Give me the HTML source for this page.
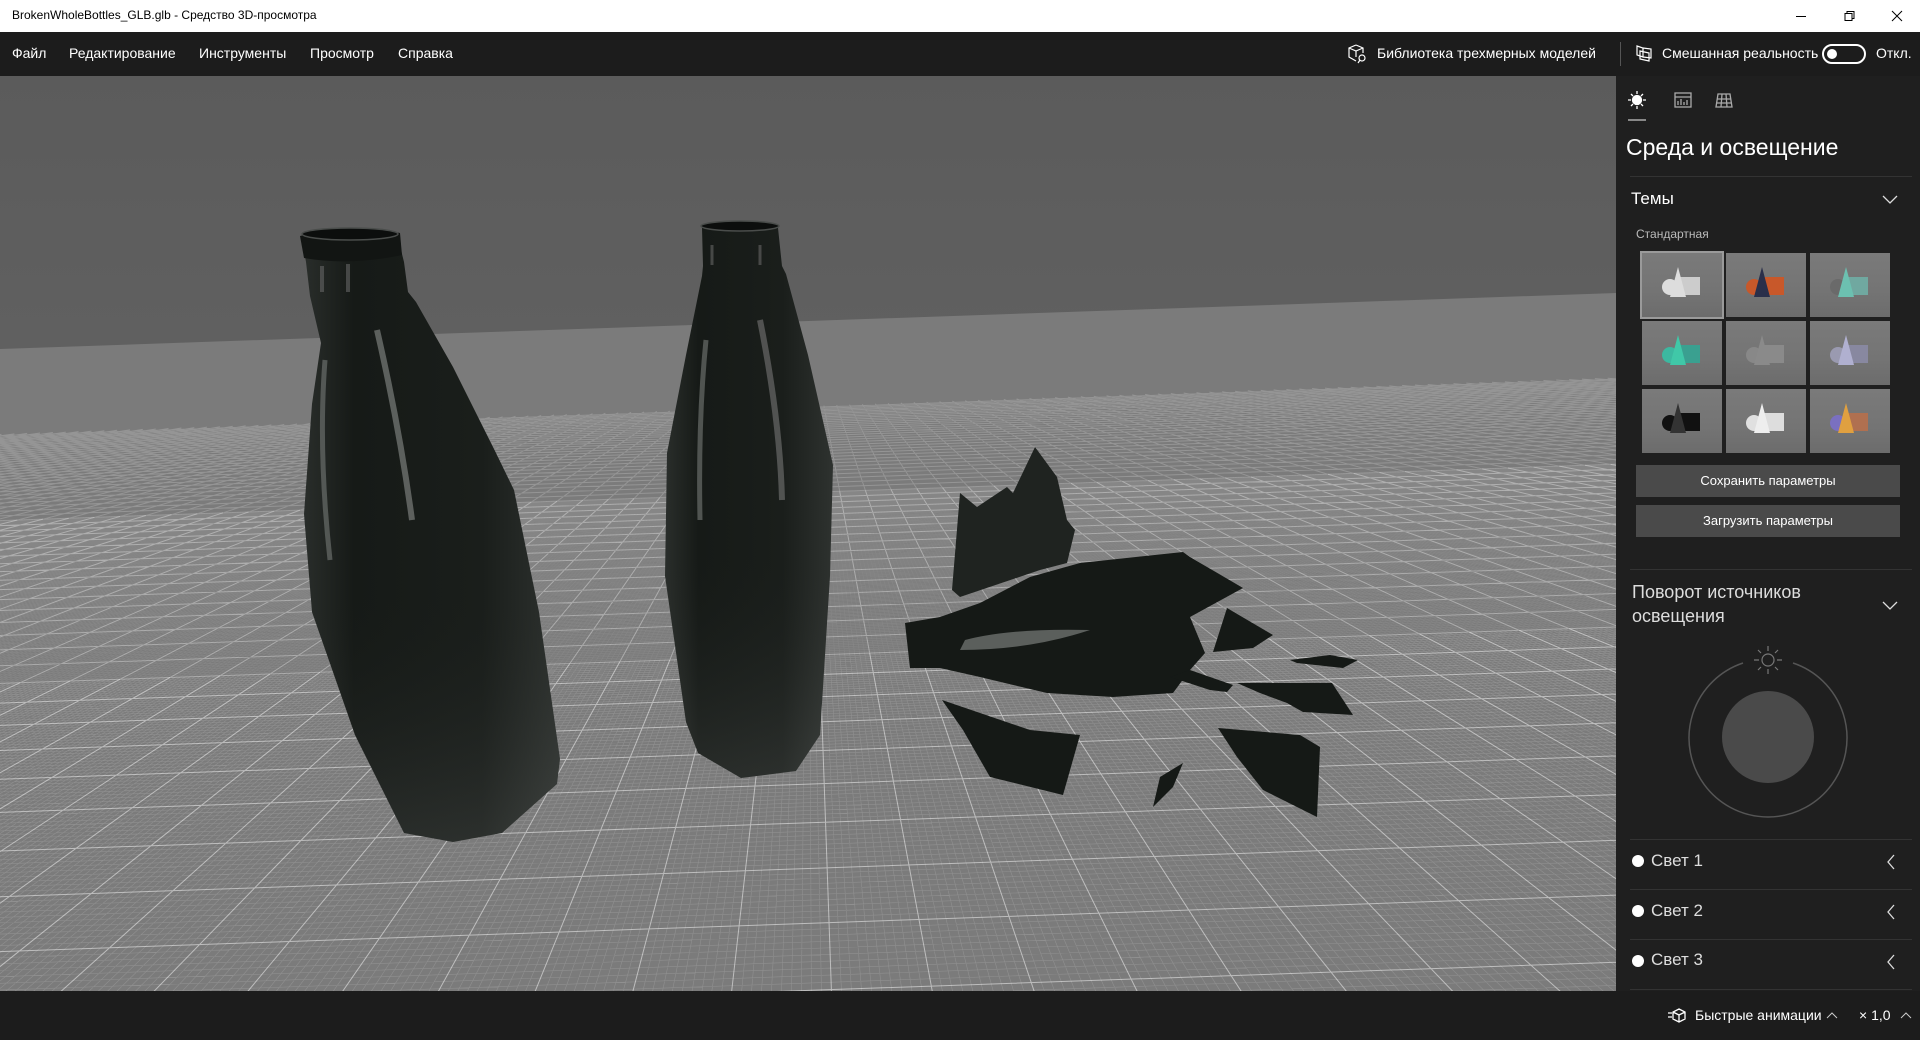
<!DOCTYPE html>
<html><head><meta charset="utf-8">
<style>
*{margin:0;padding:0;box-sizing:border-box}
html,body{width:1920px;height:1040px;overflow:hidden}
body{background:#1f1f1f;font-family:"Segoe UI","Liberation Sans","Noto Sans CJK SC",sans-serif;position:relative;color:#fff}
.abs{position:absolute}
#title{left:0;top:0;width:1920px;height:32px;background:#fff;color:#000;font-size:12px}
#menu{left:0;top:32px;width:1920px;height:44px;background:#1c1c1c;font-size:14px}
#menu span{position:absolute;top:13px;white-space:nowrap}
#view{left:0;top:76px;width:1616px;height:915px;overflow:hidden;background:#666}
#panel{left:1616px;top:76px;width:304px;height:915px;background:#1f1f1f;overflow:hidden}
#bottom{left:0;top:991px;width:1920px;height:49px;background:#1c1c1c;font-size:14px;overflow:hidden}
.t{position:absolute;white-space:nowrap}
.line{position:absolute;left:14px;width:282px;height:1px;background:#333}
.th{position:absolute;width:80px;height:64px;background:linear-gradient(#7a7a7a,#747474 60%,#6c6c6c);overflow:hidden}
.btn{position:absolute;left:20px;width:264px;height:32px;background:#4a4a4a;font-size:13px;text-align:center;line-height:32px}
.dot{position:absolute;left:16px;width:12px;height:12px;border-radius:50%;background:#fff}
</style></head><body>
<div id="title" class="abs">
 <span class="t" style="left:12px;top:8px">BrokenWholeBottles_GLB.glb - Средство 3D-просмотра</span>
 <svg class="abs" style="left:1796px;top:10px" width="120" height="12" viewBox="0 0 120 12"><path d="M0 6.5h10" stroke="#000" stroke-width="1"/><path d="M49 3.5h7v7h-7zM51 3.5v-2h7v7h-2" fill="none" stroke="#000"/><path d="M96 1l10 10M106 1l-10 10" stroke="#000"/></svg>
</div>
<div id="menu" class="abs">
 <span style="left:12px">Файл</span><span style="left:69px">Редактирование</span><span style="left:199px">Инструменты</span><span style="left:310px">Просмотр</span><span style="left:398px">Справка</span>
 <svg class="abs" style="left:1348px;top:12px" width="20" height="20" viewBox="0 0 20 20" fill="none" stroke="#fff" stroke-width="1.2"><path d="M8 1l7 3v5M8 1L1 4v9l7 4M1 4l7 3 7-3M8 7v6"/><circle cx="14" cy="14" r="3"/><path d="M12 16l-2 3"/></svg>
 <span style="left:1377px">Библиотека трехмерных моделей</span>
 <div class="abs" style="left:1620px;top:10px;width:1px;height:24px;background:#555"></div>
 <svg class="abs" style="left:1635px;top:12px" width="20" height="20" viewBox="0 0 20 20" fill="none" stroke="#fff" stroke-width="1.2"><path d="M2 2l6 2v9l-6-2zM8 4l8 1v9l-8-1M5 7l9 2v8l-9-2z"/></svg>
 <span style="left:1662px">Смешанная реальность</span>
 <div class="abs" style="left:1822px;top:12px;width:44px;height:20px;border:2px solid #fff;border-radius:10px"><div class="abs" style="left:3px;top:3px;width:10px;height:10px;border-radius:50%;background:#fff"></div></div>
 <span style="left:1876px">Откл.</span>
</div>
<div id="view" class="abs">
<svg width="1616" height="915" viewBox="0 76 1616 915" style="display:block">
 <defs>
  <linearGradient id="sky" x1="0" y1="0" x2="0" y2="1"><stop offset="0" stop-color="#5b5b5b"/><stop offset="1" stop-color="#6c6c6c"/></linearGradient>
  <clipPath id="fc"><polygon points="0,349 1616,293 1616,991 0,991"/></clipPath>
  <linearGradient id="bg1" x1="0" y1="0" x2="1" y2="0"><stop offset="0" stop-color="#2a2e2b"/><stop offset="0.2" stop-color="#161a17"/><stop offset="0.7" stop-color="#1a1e1b"/><stop offset="1" stop-color="#2e322f"/></linearGradient>
  <linearGradient id="bv" x1="0" y1="0" x2="0" y2="1"><stop offset="0" stop-color="#000" stop-opacity="0"/><stop offset="0.55" stop-color="#000" stop-opacity="0"/><stop offset="1" stop-color="#fff" stop-opacity="0.08"/></linearGradient>
 </defs>
 <rect x="0" y="76" width="1616" height="915" fill="url(#sky)"/>
 <polygon points="0,349 1616,293 1616,991 0,991" fill="#7b7b7b"/>
 <g clip-path="url(#fc)"><g id="grid" transform="rotate(-2 808 320)"></g></g>
 <!-- bottle 1 -->
 <path d="M302,240 L398,238 L404,262 L408,292 L416,302 L453,367 L496,453 L514,490 L539,612 L560,759 L557,784 L502,833 L453,842 L404,833 L355,735 L312,612 L304,514 L312,404 L321,343 L310,296 L306,262 Z" fill="url(#bg1)"/>
 <path d="M302,240 L398,238 L404,262 L408,292 L416,302 L453,367 L496,453 L514,490 L539,612 L560,759 L557,784 L502,833 L453,842 L404,833 L355,735 L312,612 L304,514 L312,404 L321,343 L310,296 L306,262 Z" fill="url(#bv)"/>
 <path d="M300,236 Q350,222 400,233 L402,255 Q350,266 304,258 Z" fill="#121513"/>
 <ellipse cx="350" cy="234" rx="48" ry="6" fill="#0c0e0d" stroke="#4a4d4b" stroke-width="1.5"/>
 <path d="M325,360 Q318,450 330,560" stroke="#6a6d6b" stroke-width="5" fill="none" opacity=".7"/>
 <path d="M377,330 Q400,430 412,520" stroke="#7a7d7b" stroke-width="6" fill="none" opacity=".7"/>
 <path d="M322,266 v26 M348,264 v28" stroke="#666" stroke-width="4" opacity=".6"/>
 <!-- bottle 2 -->
 <path d="M702,228 L778,228 L782,266 L786,274 L808,355 L833,465 L830,576 L820,735 L796,771 L741,778 L698,753 L686,722 L665,576 L667,453 L686,355 L702,276 L703,266 Z" fill="url(#bg1)"/>
 <path d="M702,228 L778,228 L782,266 L786,274 L808,355 L833,465 L830,576 L820,735 L796,771 L741,778 L698,753 L686,722 L665,576 L667,453 L686,355 L702,276 L703,266 Z" fill="url(#bv)"/>
 <ellipse cx="740" cy="226" rx="39" ry="5" fill="#0c0e0d" stroke="#4a4d4b" stroke-width="1.5"/>
 <path d="M712,245 v20 M760,245 v20" stroke="#666" stroke-width="3" opacity=".6"/>
 <path d="M706,340 Q698,420 700,520" stroke="#6a6d6b" stroke-width="5" fill="none" opacity=".7"/>
 <path d="M760,320 Q780,420 782,500" stroke="#777" stroke-width="6" fill="none" opacity=".6"/>
 <!-- broken -->
 <polygon points="960,493 977,507 1007,487 1013,493 1035,447 1057,477 1067,520 1075,530 1067,563 1040,570 960,597 952,590" fill="#1f2320"/>
 <path d="M905,623 L940,617 L980,603 L1030,577 L1080,563 L1183,552 L1190,557 L1243,588 L1190,617 L1205,653 L1190,670 L1173,693 L1113,697 L1047,693 L980,677 L940,668 L910,668 Z" fill="#151916"/>
 <path d="M965,640 Q1010,628 1090,630 Q1030,650 960,650Z" fill="#6d706e" opacity=".8"/>
 <polygon points="942,700 963,730 990,777 1063,795 1080,735 1030,730" fill="#151916"/>
 <polygon points="1227,608 1273,635 1253,648 1213,652 1220,630" fill="#151916"/>
 <polygon points="1290,660 1330,655 1358,660 1343,668 1297,663" fill="#151916"/>
 <polygon points="1237,683 1332,683 1353,715 1303,712 1287,703 1260,693" fill="#151916"/>
 <polygon points="1170,677 1190,670 1233,685 1227,692 1210,690" fill="#151916"/>
 <polygon points="1218,728 1300,735 1320,747 1317,817 1263,790 1237,757" fill="#151916"/>
 <polygon points="1160,777 1183,763 1173,787 1153,807" fill="#151916"/>
</svg>
</div>
<div id="panel" class="abs">
 <svg class="abs" style="left:12px;top:14px" width="130" height="20" viewBox="0 0 130 20" fill="none" stroke="#fff" stroke-width="1.3">
  <circle cx="9" cy="10" r="4.5" fill="#fff"/><path d="M9 1v3M9 16v3M0 10h3M15 10h3M3 4l2 2M13 14l2 2M3 16l2-2M13 6l2-2"/>
  <g stroke="#aaa"><rect x="47" y="3" width="16" height="14"/><path d="M47 7h16M50 15v-4M53 15v-6M56 15v-3M59 15v-5"/></g>
  <g stroke="#aaa"><path d="M90 4h12l2 13h-16zM89 9h14M88 13h16M94 4l-1 13M98 4l1 13"/></g>
 </svg>
 <div class="abs" style="left:12px;top:43px;width:18px;height:2px;background:#888"></div>
 <div class="t" style="left:10px;top:58px;font-size:23px;color:#fff">Среда и освещение</div>
 <div class="line" style="top:100px"></div>
 <div class="t" style="left:15px;top:113px;font-size:17px">Темы</div>
 <svg class="abs" style="left:266px;top:118px" width="16" height="10"><path d="M1 2l7 7 7-7" stroke="#ddd" fill="none" stroke-width="1.3"/></svg>
 <div class="t" style="left:20px;top:151px;font-size:12px;color:#bbb">Стандартная</div>
 <div id="thumbs"></div>
 <div class="btn" style="top:389px">Сохранить параметры</div>
 <div class="btn" style="top:429px">Загрузить параметры</div>
 <div class="line" style="top:493px"></div>
 <div class="t" style="left:16px;top:504px;font-size:18px;line-height:24px;color:#ddd">Поворот источников<br>освещения</div>
 <svg class="abs" style="left:266px;top:524px" width="16" height="10"><path d="M1 2l7 7 7-7" stroke="#ddd" fill="none" stroke-width="1.3"/></svg>
 <svg class="abs" style="left:70px;top:566px" width="164" height="190" viewBox="0 0 164 190">
  <path d="M57 21 A79 79 0 1 0 107 21" fill="none" stroke="#555" stroke-width="1.5"/>
  <circle cx="82" cy="95" r="46" fill="#4a4a4a"/>
  <circle cx="82" cy="18" r="6" fill="none" stroke="#777" stroke-width="1.2"/>
  <path d="M82 4v5M82 27v5M68 18h5M91 18h5M72 8l3 3M89 25l3 3M72 28l3-3M89 11l3-3" stroke="#777" stroke-width="1.2"/>
 </svg>
 <div class="line" style="top:763px"></div>
 <div class="dot" style="top:779px"></div><div class="t" style="left:35px;top:775px;font-size:17px;color:#ddd">Свет 1</div>
 <div class="line" style="top:813px"></div>
 <div class="dot" style="top:829px"></div><div class="t" style="left:35px;top:825px;font-size:17px;color:#ddd">Свет 2</div>
 <div class="line" style="top:863px"></div>
 <div class="dot" style="top:879px"></div><div class="t" style="left:35px;top:874px;font-size:17px;color:#ddd">Свет 3</div>
 <div class="line" style="top:913px"></div>
 <svg class="abs" style="left:270px;top:778px" width="10" height="120"><path d="M8 1l-6 7 6 7M8 51l-6 7 6 7M8 101l-6 7 6 7" stroke="#ddd" fill="none" stroke-width="1.3"/></svg>
</div>
<div id="bottom" class="abs">
 <svg class="abs" style="left:1667px;top:17px" width="20" height="16" viewBox="0 0 20 16" fill="none" stroke="#fff" stroke-width="1.3"><path d="M1 5h4M1 9h4M12 1l6 3v7l-6 3-6-3V4zM6 4l6 3 6-3M12 7v7"/></svg>
 <span class="t" style="left:1695px;top:16px">Быстрые анимации</span>
 <svg class="abs" style="left:1826px;top:20px" width="12" height="8"><path d="M1 7l5-5 5 5" stroke="#ccc" fill="none"/></svg>
 <span class="t" style="left:1859px;top:16px">× 1,0</span>
 <svg class="abs" style="left:1900px;top:20px" width="12" height="8"><path d="M1 7l5-5 5 5" stroke="#ccc" fill="none"/></svg>
</div>
<script>
(function(){
var ns="http://www.w3.org/2000/svg",g=document.getElementById("grid");
var cx=808,hy=320,f=900,H=6.7;
function P(X,Z){return [cx+f*X/Z,hy+f*H/Z];}
function add(d,op,w){var p=document.createElementNS(ns,"path");p.setAttribute("d",d);p.setAttribute("stroke","rgba(255,255,255,"+op+")");p.setAttribute("stroke-width",w);p.setAttribute("fill","none");g.appendChild(p);}
function seg(a,b){return "M"+a[0].toFixed(1)+" "+a[1].toFixed(1)+"L"+b[0].toFixed(1)+" "+b[1].toFixed(1);}
var bands=[[8,18,.5,.16],[18,35,.35,.09],[35,70,.2,0]];
bands.forEach(function(bd){
 var z0=bd[0],z1=bd[1],s="",S="";
 var xm=Math.ceil(f*0+1200/f*z1);
 for(var i=-xm*10;i<=xm*10;i++){var X=i/10,maj=(i%10===0);
  if(!maj&&bd[3]===0)continue;
  var d=seg(P(X,z0),P(X,z1)); if(maj)S+=d;else s+=d;}
 for(var k=z0*10;k<z1*10;k++){var Z=k/10,maj=(k%10===0);
  if(!maj&&bd[3]===0)continue;
  var y=hy+f*H/Z,xr=f*xm/Z;
  var d="M"+(cx-xr).toFixed(1)+" "+y.toFixed(2)+"L"+(cx+xr).toFixed(1)+" "+y.toFixed(2);
  if(maj)S+=d;else s+=d;}
 if(s)add(s,bd[3],0.6);add(S,bd[2],1);
});
var cols=[["#ddd","#ddd","#ccc"],["#c8582a","#2a2f4a","#c8582a"],["#6a6a6a","#6cc0b0","#70a8a0"],["#3cb8a0","#40c8a8","#3aa090"],["#888","#8a8a8a","#8a8a8a"],["#9a9ab0","#b0b0d0","#8888a0"],["#111","#333","#111"],["#e0e0e0","#eee","#ddd"],["#7a70c0","#e0a040","#b07050"]];
var th=document.getElementById("thumbs");
for(var r=0;r<3;r++)for(var c=0;c<3;c++){var n=r*3+c,cl=cols[n];
 var d=document.createElement("div");d.className="th";
 d.style.left=(26+c*84)+"px";d.style.top=(177+r*68)+"px";
 if(n===0)d.style.outline="2px solid #9a9a9a";
 d.innerHTML='<svg width="80" height="64"><circle cx="28" cy="34" r="8" fill="'+cl[0]+'"/><rect x="38" y="24" width="20" height="18" fill="'+cl[2]+'"/><polygon points="36,14 28,44 44,44" fill="'+cl[1]+'"/></svg>';
 th.appendChild(d);}
})();
</script>
</body></html>
